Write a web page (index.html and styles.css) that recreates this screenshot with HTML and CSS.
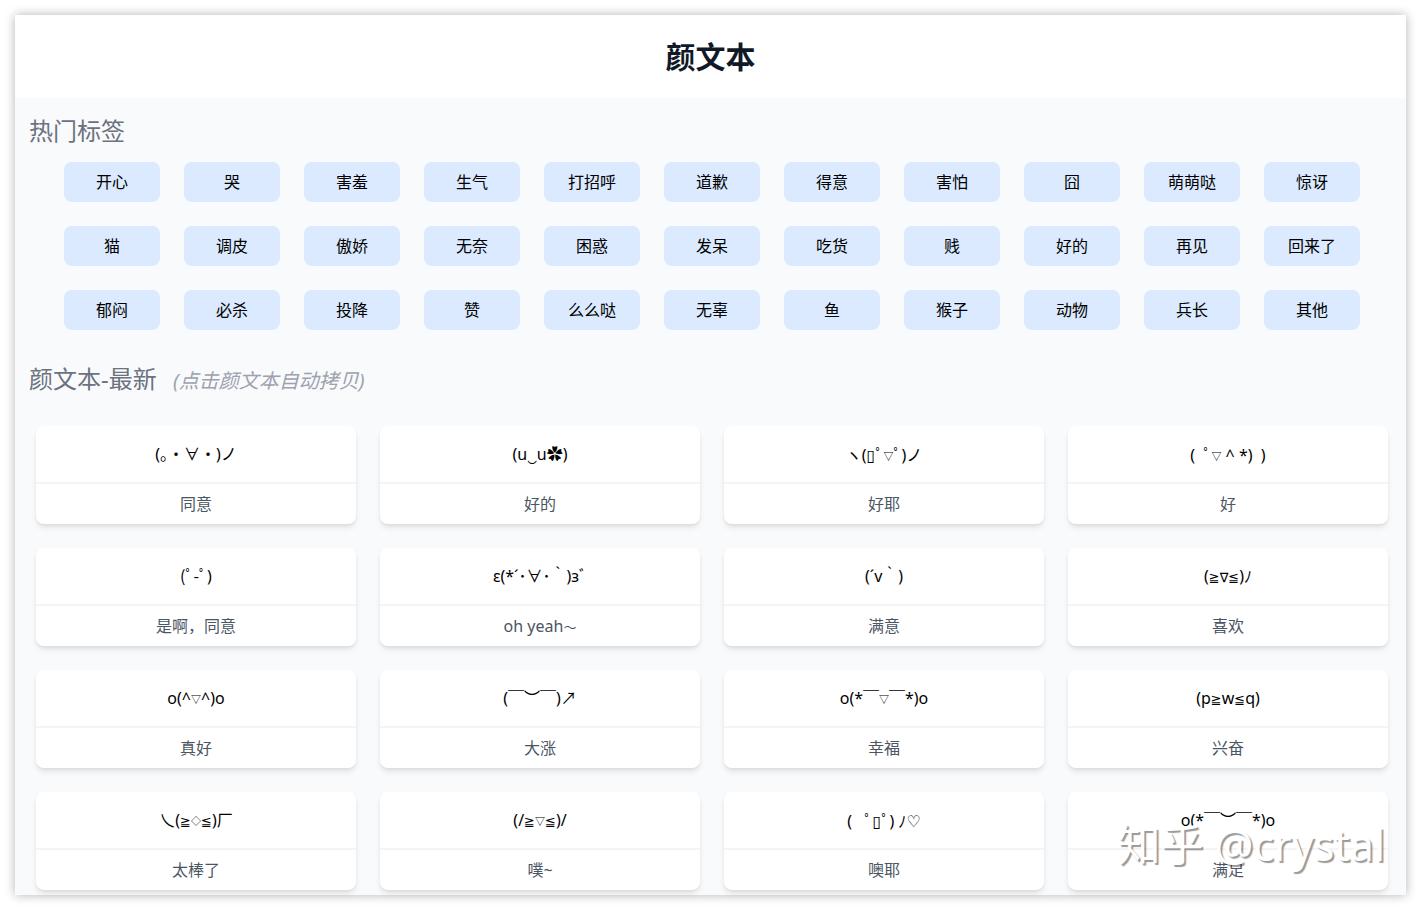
FILE: index.html
```
<!DOCTYPE html>
<html lang="zh-CN">
<head>
<meta charset="utf-8">
<title>颜文本</title>
<link rel="stylesheet" href="styles.css">
</head>
<body>
<div class="window">
  <header class="header"><h1 class="title">颜文本</h1></header>
  <main class="main">
    <section>
      <h2 class="heading">热门标签</h2>
      <div class="tags">
        <button class="tag">开心</button><button class="tag">哭</button><button class="tag">害羞</button><button class="tag">生气</button><button class="tag">打招呼</button><button class="tag">道歉</button><button class="tag">得意</button><button class="tag">害怕</button><button class="tag">囧</button><button class="tag">萌萌哒</button><button class="tag">惊讶</button>
        <button class="tag">猫</button><button class="tag">调皮</button><button class="tag">傲娇</button><button class="tag">无奈</button><button class="tag">困惑</button><button class="tag">发呆</button><button class="tag">吃货</button><button class="tag">贱</button><button class="tag">好的</button><button class="tag">再见</button><button class="tag">回来了</button>
        <button class="tag">郁闷</button><button class="tag">必杀</button><button class="tag">投降</button><button class="tag">赞</button><button class="tag">么么哒</button><button class="tag">无辜</button><button class="tag">鱼</button><button class="tag">猴子</button><button class="tag">动物</button><button class="tag">兵长</button><button class="tag">其他</button>
      </div>
    </section>
    <section class="latest">
      <h2 class="heading">颜文本-最新 <em class="hint">(点击颜文本自动拷贝)</em></h2>
      <div class="cards">
        <button class="card"><span class="face">(。・∀・)ノ</span><span class="name">同意</span></button>
        <button class="card"><span class="face">(u‿u✿)</span><span class="name">好的</span></button>
        <button class="card"><span class="face">ヽ(<span class="box">▯</span><span class="kana">ﾟ</span><span class="tri">▽</span><span class="kana">ﾟ</span>)ノ</span><span class="name">好耶</span></button>
        <button class="card"><span class="face">(&nbsp;&nbsp;<span class="kana">ﾟ</span><span class="tri">▽</span>&nbsp;^&nbsp;*)&nbsp;&nbsp;)</span><span class="name">好</span></button>
        <button class="card"><span class="face">(ﾟ-ﾟ)</span><span class="name">是啊，同意</span></button>
        <button class="card"><span class="face">ε(*´･∀･｀)зﾞ</span><span class="name">oh yeah<span class="sym">～</span></span></button>
        <button class="card"><span class="face">(´v｀)</span><span class="name">满意</span></button>
        <button class="card"><span class="face">(<span class="sym">≧∇≦</span>)ﾉ</span><span class="name">喜欢</span></button>
        <button class="card"><span class="face">o(^<span class="tri">▽</span>^)o</span><span class="name">真好</span></button>
        <button class="card"><span class="face">(￣︶￣)↗</span><span class="name">大涨</span></button>
        <button class="card"><span class="face">o(*￣<span class="tri">▽</span>￣*)o</span><span class="name">幸福</span></button>
        <button class="card"><span class="face">(p<span class="sym">≧</span>w<span class="sym">≦</span>q)</span><span class="name">兴奋</span></button>
        <button class="card"><span class="face">乀(<span class="sym">≧</span><span class="tri">◇</span><span class="sym">≦</span>)厂</span><span class="name">太棒了</span></button>
        <button class="card"><span class="face">(/<span class="sym">≧</span><span class="tri">▽</span><span class="sym">≦</span>)/</span><span class="name">噗~</span></button>
        <button class="card"><span class="face">(&nbsp;&nbsp;&nbsp;<span class="kana">ﾟ</span><span class="box">▯</span><span class="kana">ﾟ</span>)&nbsp;ﾉ<span class="box">♡</span></span><span class="name">噢耶</span></button>
        <button class="card"><span class="face">o(*￣︶￣*)o</span><span class="name">满足</span></button>
      </div>
    </section>
  </main>
  <div class="watermark">知乎 @crystal</div>
</div>
</body>
</html>
```
FILE: styles.css
```
* { box-sizing: border-box; }
body {
  margin: 0;
  padding: 15px;
  background: #fff;
  font-family: "Noto Sans", "Noto Sans CJK SC", sans-serif;
}
.window {
  position: relative;
  background: #f9fafb;
  box-shadow: 0 0 10px rgba(0, 0, 0, 0.3);
}
.header {
  padding: 24px 0 23px;
  background: #fff;
  text-align: center;
}
.title {
  margin: 0;
  font-size: 30px;
  line-height: 36px;
  font-weight: 700;
  color: #111827;
}
.main { padding: 17px 11px 5px 14px; }
.heading {
  margin: 0;
  font-size: 24px;
  line-height: 32px;
  font-weight: 400;
  color: #6b7280;
}
.hint {
  margin-left: 10px;
  font-size: 20px;
  line-height: 24px;
  color: #9ca3af;
}
.tags {
  display: flex;
  flex-wrap: wrap;
  justify-content: center;
  gap: 24px;
  margin-top: 15px;
}
.tag {
  width: 96px;
  height: 40px;
  padding: 0;
  border: 0;
  border-radius: 8px;
  background: #dbeafe;
  color: #000;
  font: 400 16px/24px "Noto Sans", "Noto Sans CJK SC", sans-serif;
  cursor: pointer;
}
.latest { margin-top: 33px; }
.cards {
  display: flex;
  flex-wrap: wrap;
  justify-content: center;
  gap: 24px;
  margin-top: 31px;
}
.card {
  display: flex;
  flex-direction: column;
  width: 320px;
  padding: 0;
  border: 0;
  border-radius: 8px;
  background: #fff;
  box-shadow: 0 4px 6px -1px rgba(0, 0, 0, 0.1), 0 2px 4px -1px rgba(0, 0, 0, 0.06);
  font: 400 16px/24px "Noto Sans", "Noto Sans CJK SC", sans-serif;
  text-align: center;
  cursor: pointer;
}
.face {
  align-self: stretch;
  height: 58px;
  padding: 16px 0;
  border-bottom: 2px solid #f3f4f6;
  color: #000;
}
.name {
  align-self: stretch;
  height: 40px;
  padding: 8px 0;
  color: #4b5563;
}
.box { font-family: "DejaVu Sans", sans-serif; }
.kana { font-family: "Noto Sans CJK JP", sans-serif; }
.sym {
  font-family: "DejaVu Sans", "Noto Sans CJK SC", sans-serif;
  font-size: 13px;
}
.tri {
  font-family: "Noto Sans CJK SC", sans-serif;
  font-size: 10px;
  vertical-align: 1px;
}
.watermark {
  position: absolute;
  right: 21px;
  bottom: 22px;
  font-size: 43px;
  line-height: 56px;
  color: #fff;
  text-shadow: 2px 2px 1px rgba(0, 0, 0, 0.4);
  pointer-events: none;
}
```
